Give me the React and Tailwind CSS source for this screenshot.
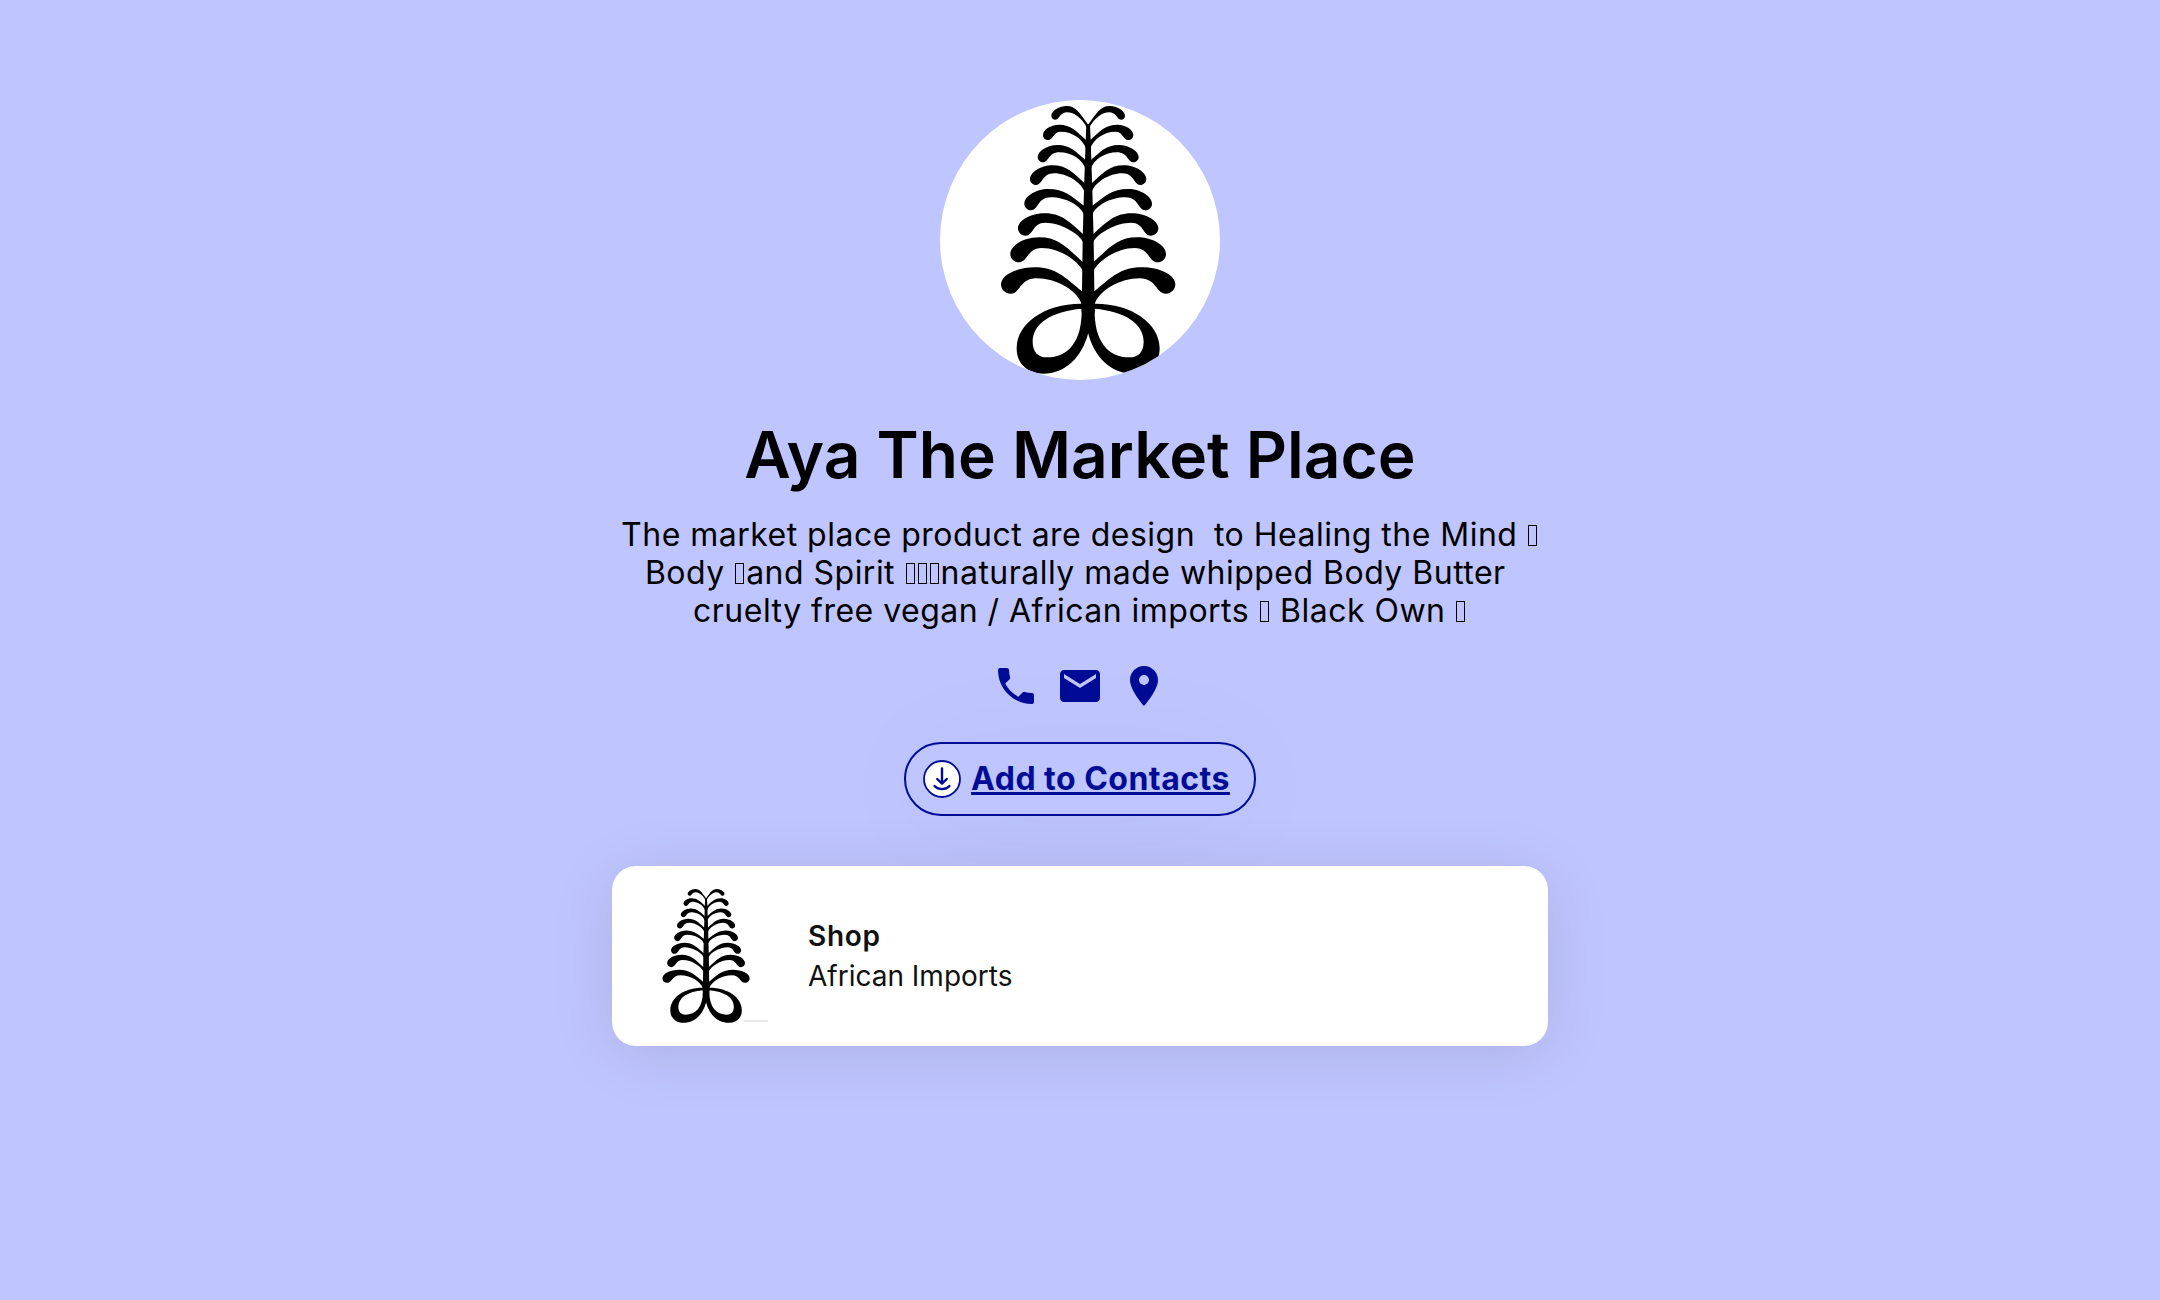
import { Fragment } from 'react';
import { MdEmail, MdLocationOn, MdPhone } from 'react-icons/md';

const CONTACTS = [
  { label: 'Call', href: '#phone', Icon: MdPhone },
  { label: 'Email', href: '#email', Icon: MdEmail },
  { label: 'Location', href: '#location', Icon: MdLocationOn }
];

const BIO =
  'The market place product are design  to Healing the Mind ▯ Body ▯and Spirit ▯▯▯naturally made whipped Body Butter\u00a0 cruelty free vegan / African imports ▯ Black Own ▯';

// left edge, bottom of the tip, tip radius, peak, underside peak, upper and lower join with the stem
const LEAVES = [
  { l: 364, b: 89, r: 12, px: 410, py: 48, ux: 413, uy: 67, jx: 473, ju: 102, jl: 118 },
  { l: 339, b: 150, r: 15, px: 387, py: 104, ux: 393, uy: 125, jx: 468, ju: 150, jl: 176 },
  { l: 323, b: 217, r: 16, px: 383, py: 165, ux: 388, uy: 187, jx: 467, ju: 211, jl: 238 },
  { l: 300, b: 285, r: 18, px: 368, py: 226, ux: 372, uy: 250, jx: 464, ju: 280, jl: 306 },
  { l: 283, b: 361, r: 20, px: 355, py: 297, ux: 362, uy: 322, jx: 463, ju: 348, jl: 376 },
  { l: 264, b: 437, r: 22, px: 345, py: 370, ux: 345, uy: 398, jx: 460, ju: 433, jl: 458 },
  { l: 241, b: 517, r: 25, px: 328, py: 442, ux: 335, uy: 474, jx: 458, ju: 516, jl: 542 },
  { l: 213, b: 611, r: 28, px: 315, py: 532, ux: 320, uy: 565, jx: 455, ju: 603, jl: 642 }
];

const leafPath = ({ l, b, r, px, py, ux, uy, jx, ju, jl }) => {
  const w = jx - px;
  const cy = b - r;
  return [
    `M475 ${ju} L${jx} ${ju}`,
    `C${jx - w * 0.36} ${ju - (ju - py) * 0.58} ${px + w * 0.44} ${py} ${px} ${py}`,
    `C${px - (px - l) * 0.55} ${py} ${l} ${cy - r} ${l} ${cy}`,
    `C${l} ${cy + r * 0.6} ${l + r * 0.5} ${b} ${l + r} ${b}`,
    `C${l + r * 2.1} ${b} ${l + r * 2} ${uy} ${ux} ${uy}`,
    `C${ux + w * 0.42} ${uy} ${jx - w * 0.1} ${ju - 2} ${jx} ${jl}`,
    `L475 ${jl} Z`
  ].join(' ');
};

function FernHalf() {
  return (
    <>
      {LEAVES.map((leaf) => (
        <path key={leaf.l} d={leafPath(leaf)} />
      ))}
      <path d="M476 103 L469 104 L467 150 L462 300 L458 450 L456 600 L454 640 L455 665 L476 728 Z" />
      <path
        fillRule="evenodd"
        d="M476 641 L455 641 C345 640 260 700 260 775 C260 826 298 851 340 851 C405 851 456 802 475 728 L476 728 Z M455 656 C365 664 308 700 308 755 C308 788 326 802 350 802 C415 802 457 754 455 656 Z"
      />
    </>
  );
}

function Fern({ className, label }) {
  return (
    <svg viewBox="30 30 840 840" className={className} role="img" aria-label={label}>
      <FernHalf />
      <g transform="translate(949 0) scale(-1 1)">
        <FernHalf />
      </g>
    </svg>
  );
}

function DownloadIcon() {
  return (
    <svg viewBox="0 0 38 38" className="size-[38px] shrink-0" fill="none" stroke="currentColor" aria-hidden="true">
      <circle cx="19" cy="19" r="18" fill="#fff" strokeWidth="1.8" />
      <path d="M19 8.5 V23.5 M14.2 19 L19 23.7 L23.8 19" strokeWidth="2.4" strokeLinecap="round" strokeLinejoin="round" />
      <path d="M11.5 26 C15.5 30.2 22.5 30.2 26.5 26" strokeWidth="2.4" strokeLinecap="round" />
    </svg>
  );
}

export default function App() {
  return (
    <div className="min-h-screen bg-[#bfc5ff] px-6 py-[100px] font-['Inter',sans-serif] text-black">
      <main className="mx-auto flex max-w-[936px] flex-col items-center">
        <div className="size-[280px] overflow-hidden rounded-full bg-white">
          <Fern className="size-full" label="Aya fern symbol" />
        </div>

        <h1 className="mt-9 text-center text-[64px] leading-[78px] font-semibold">Aya The Market Place</h1>

        <p className="mt-[22px] text-center text-[32px] leading-[38px] tracking-[0.015em] whitespace-pre-wrap">
          {BIO.split('▯').map((part, i) => (
            <Fragment key={i}>
              {i > 0 && <span className="mr-[2px] ml-px inline-block h-[21px] w-[9px] border border-black" />}
              {part}
            </Fragment>
          ))}
        </p>

        <nav className="mt-8 flex gap-4 text-[#000c96]">
          {CONTACTS.map(({ label, href, Icon }) => (
            <a key={label} href={href} aria-label={label}>
              <Icon className="size-12" />
            </a>
          ))}
        </nav>

        <button className="mt-8 flex h-[74px] items-center gap-[10px] rounded-full border-2 border-[#000c96] pr-6 pl-[17px] text-[32px] font-bold tracking-[0.015em] text-[#000c96] shadow-[0_8px_120px_rgba(0,0,0,0.04)]">
          <DownloadIcon />
          <span className="underline">Add to Contacts</span>
        </button>

        <a
          href="#shop"
          className="mt-[50px] flex w-full items-center gap-9 rounded-3xl bg-white p-5 text-[28px] leading-10 text-[#111] shadow-[0_8px_64px_rgba(0,0,0,0.1)]"
        >
          <div className="relative size-[140px] shrink-0">
            <Fern className="size-full" label="Shop logo" />
            <span className="absolute right-1 bottom-1 h-[2px] w-6 bg-gray-200" />
          </div>
          <div>
            <h2 className="font-semibold tracking-wide">Shop</h2>
            <p>African Imports</p>
          </div>
        </a>
      </main>
    </div>
  );
}
